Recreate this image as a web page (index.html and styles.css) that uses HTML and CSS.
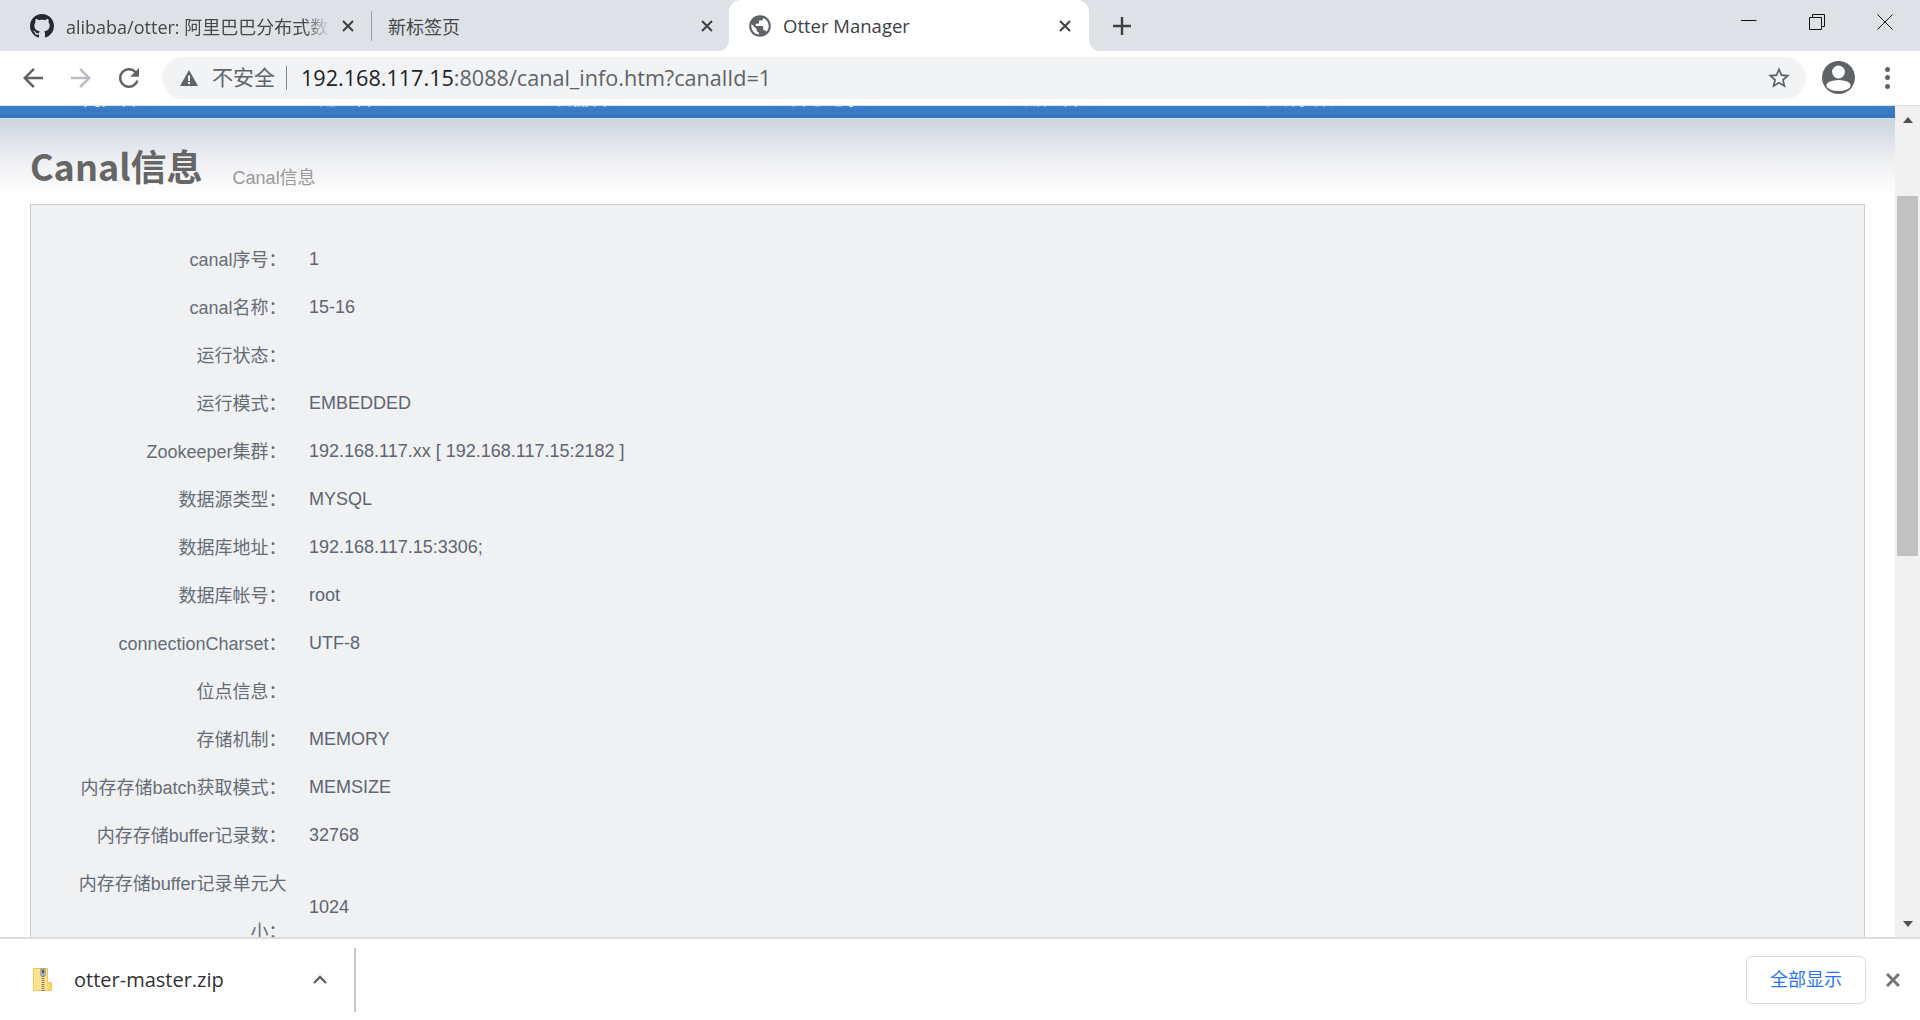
FILE: index.html
```html
<!DOCTYPE html>
<html lang="zh-CN">
<head>
<meta charset="utf-8">
<title>Otter Manager</title>
<link rel="stylesheet" href="styles.css">
</head>
<body>
<div class="tabstrip">
  <div class="tab tab-first">
    <svg class="favicon" viewBox="0 0 16 16"><path fill="#24292e" d="M8 0C3.58 0 0 3.58 0 8c0 3.54 2.29 6.53 5.47 7.59.4.07.55-.17.55-.38 0-.19-.01-.82-.01-1.49-2.01.37-2.53-.49-2.69-.94-.09-.23-.48-.94-.82-1.13-.28-.15-.68-.52-.01-.53.63-.01 1.08.58 1.23.82.72 1.21 1.87.87 2.33.66.07-.52.28-.87.51-1.07-1.78-.2-3.64-.89-3.64-3.95 0-.87.31-1.59.82-2.15-.08-.2-.36-1.02.08-2.12 0 0 .67-.21 2.2.82.64-.18 1.32-.27 2-.27.68 0 1.36.09 2 .27 1.53-1.04 2.2-.82 2.2-.82.44 1.1.16 1.92.08 2.12.51.56.82 1.27.82 2.15 0 3.07-1.87 3.75-3.65 3.95.29.25.54.73.54 1.48 0 1.07-.01 1.93-.01 2.2 0 .21.15.46.55.38A8.013 8.013 0 0016 8c0-4.42-3.58-8-8-8z"/></svg>
    <span class="tab-title fade">alibaba/otter: 阿里巴巴分布式数</span>
    <svg class="tab-close" viewBox="0 0 14 14"><path d="M2 2l10 10M12 2L2 12"/></svg>
  </div>
  <div class="tab-sep"></div>
  <div class="tab tab-second">
    <span class="tab-title">新标签页</span>
    <svg class="tab-close" viewBox="0 0 14 14"><path d="M2 2l10 10M12 2L2 12"/></svg>
  </div>
  <div class="tab tab-active">
    <svg class="globe" viewBox="0 0 24 24"><path fill="#5f6368" d="M12 2C6.48 2 2 6.48 2 12s4.48 10 10 10 10-4.48 10-10S17.52 2 12 2zm-1 17.93c-3.95-.49-7-3.85-7-7.93 0-.62.08-1.21.21-1.79L9 15v1c0 1.1.9 2 2 2v1.93zm6.9-2.54c-.26-.81-1-1.39-1.9-1.39h-1v-3c0-.55-.45-1-1-1H8v-2h2c.55 0 1-.45 1-1V7h2c1.1 0 2-.9 2-2v-.41c2.93 1.19 5 4.06 5 7.41 0 2.08-.8 3.97-2.1 5.39z"/></svg>
    <span class="tab-title">Otter Manager</span>
    <svg class="tab-close" viewBox="0 0 14 14"><path d="M2 2l10 10M12 2L2 12"/></svg>
  </div>
  <svg class="new-tab" viewBox="0 0 20 20"><path d="M10 1v18M1 10h18"/></svg>
  <div class="window-controls">
    <svg class="win-btn" viewBox="0 0 16 16"><path d="M0 6.5h15.5"/></svg>
    <svg class="win-btn" viewBox="0 0 16 16"><path d="M.5 3.5h12v12H.5zM3.5 3.5V.5h12v12h-3"/></svg>
    <svg class="win-btn" viewBox="0 0 16 16"><path d="M.5.5l15 15M15.5.5l-15 15"/></svg>
  </div>
</div>

<div class="toolbar">
  <svg class="nav-icon" viewBox="0 0 24 24"><path fill="#5f6368" d="M20 11H7.83l5.59-5.59L12 4l-8 8 8 8 1.41-1.41L7.83 13H20v-2z"/></svg>
  <svg class="nav-icon" viewBox="0 0 24 24"><path fill="#b9bcc0" d="M4 11h12.17l-5.59-5.59L12 4l8 8-8 8-1.41-1.41L16.17 13H4v-2z"/></svg>
  <svg class="nav-icon" viewBox="0 0 24 24"><path fill="#5f6368" d="M17.65 6.35C16.2 4.9 14.21 4 12 4c-4.42 0-7.99 3.58-7.99 8s3.57 8 7.99 8c3.73 0 6.84-2.55 7.73-6h-2.08c-.82 2.33-3.04 4-5.65 4-3.31 0-6-2.69-6-6s2.69-6 6-6c1.66 0 3.14.69 4.22 1.78L13 11h7V4l-2.35 2.35z"/></svg>
  <div class="omnibox">
    <svg class="warn" viewBox="0 0 18 16"><path fill="#5f6368" d="M9 0l9 16H0z"/><path fill="#f1f3f4" d="M8 5.5h2v5.5H8zM8 12h2v2H8z"/></svg>
    <span class="insecure">不安全</span>
    <span class="omni-sep"></span>
    <span class="url"><span class="host">192.168.117.15</span>:8088/canal_info.htm?canalId=1</span>
    <svg class="star" viewBox="0 0 24 24"><path fill="#5f6368" d="M22 9.24l-7.19-.62L12 2 9.19 8.63 2 9.24l5.46 4.73L5.82 21 12 17.27 18.18 21l-1.63-7.03L22 9.24zM12 15.4l-3.76 2.27 1-4.28-3.32-2.88 4.38-.38L12 6.1l1.71 4.04 4.38.38-3.32 2.88 1 4.28L12 15.4z"/></svg>
  </div>
  <svg class="avatar" viewBox="0 0 33 33"><circle cx="16.5" cy="16.5" r="16.5" fill="#5f6368"/><circle cx="16.5" cy="11" r="6.4" fill="#fff"/><ellipse cx="16.5" cy="24.5" rx="12" ry="5.6" fill="#fff"/></svg>
  <div class="kebab"><i></i><i></i><i></i></div>
</div>

<div class="viewport">
  <div class="page">
    <div class="nav-strip">
      <ul class="nav-list">
        <li>同步管理</li><li>配置管理</li><li>机器管理</li><li>日志记录</li><li>用户管理</li><li>系统参数</li>
      </ul>
    </div>
    <div class="page-head">
      <h1 class="page-title">Canal信息</h1>
      <span class="page-sub">Canal信息</span>
    </div>
    <div class="panel">
      <div class="row"><div class="label">canal序号：</div><div class="value">1</div></div>
      <div class="row"><div class="label">canal名称：</div><div class="value">15-16</div></div>
      <div class="row"><div class="label">运行状态：</div><div class="value"></div></div>
      <div class="row"><div class="label">运行模式：</div><div class="value">EMBEDDED</div></div>
      <div class="row"><div class="label">Zookeeper集群：</div><div class="value">192.168.117.xx [ 192.168.117.15:2182 ]</div></div>
      <div class="row"><div class="label">数据源类型：</div><div class="value">MYSQL</div></div>
      <div class="row"><div class="label">数据库地址：</div><div class="value">192.168.117.15:3306;</div></div>
      <div class="row"><div class="label">数据库帐号：</div><div class="value">root</div></div>
      <div class="row"><div class="label">connectionCharset：</div><div class="value">UTF-8</div></div>
      <div class="row"><div class="label">位点信息：</div><div class="value"></div></div>
      <div class="row"><div class="label">存储机制：</div><div class="value">MEMORY</div></div>
      <div class="row"><div class="label">内存存储batch获取模式：</div><div class="value">MEMSIZE</div></div>
      <div class="row"><div class="label">内存存储buffer记录数：</div><div class="value">32768</div></div>
      <div class="row"><div class="label">内存存储buffer记录单元大小：</div><div class="value">1024</div></div>
    </div>
  </div>
  <div class="scrollbar">
    <span class="arrow-up"></span>
    <div class="track"><div class="thumb"></div></div>
    <span class="arrow-down"></span>
  </div>
</div>

<div class="download-bar">
  <svg class="zip" viewBox="0 0 19 23">
    <path fill="#fde58f" stroke="#f2c84b" d="M.5.5h14v14h4v8H.5z"/>
    <path fill="#fbd76a" d="M14 15h4v7h-4z"/>
    <rect x="7" y="0" width="6" height="8" rx="1" fill="#a9a9a9"/>
    <rect x="9" y="2" width="2" height="3" fill="#555"/>
    <path fill="none" stroke="#777" stroke-width="3" stroke-dasharray="1 1" d="M10 8v15"/>
  </svg>
  <span class="file-name">otter-master.zip</span>
  <svg class="chevron" viewBox="0 0 14 9"><path d="M1 8l6-6 6 6"/></svg>
  <div class="bar-sep"></div>
  <div class="show-all">全部显示</div>
  <svg class="bar-close" viewBox="0 0 14 14"><path d="M1 1l12 12M13 1L1 13"/></svg>
</div>
</body>
</html>
```
FILE: styles.css
```css
* { box-sizing: border-box; }
html, body { height: 100%; }
body {
  margin: 0;
  height: 1020px;
  display: flex;
  flex-direction: column;
  overflow: hidden;
  background: #fff;
  font-family: "Liberation Sans", "Noto Sans CJK SC", sans-serif;
}

/* tab strip */
.tabstrip {
  flex: none;
  height: 51px;
  display: flex;
  align-items: center;
  background: #dee1e6;
  font-family: "Open Sans", "Noto Sans CJK SC", sans-serif;
  font-size: 18px;
  color: #45474b;
}
.tab {
  height: 51px;
  display: flex;
  align-items: center;
  flex: none;
}
.tab-first { width: 371px; padding-left: 30px; }
.favicon { width: 24px; height: 24px; flex: none; margin-right: 12px; }
.tab-title { white-space: nowrap; overflow: hidden; flex: 1; min-width: 0; }
.fade {
  -webkit-mask-image: linear-gradient(90deg, #000 90%, transparent);
  mask-image: linear-gradient(90deg, #000 90%, transparent);
}
.tab-close { width: 14px; height: 14px; flex: none; fill: none; stroke: #3c4043; stroke-width: 2; margin-left: 11px; margin-right: 16px; }
.tab-sep { flex: none; width: 1px; height: 30px; background: #9aa0a6; }
.tab-second { width: 357px; padding-left: 16px; }
.tab-second .tab-close { margin-right: 15px; }
.tab-active {
  position: relative;
  width: 360px;
  padding-left: 18px;
  background: #fff;
  border-radius: 12px 12px 0 0;
  color: #3c4043;
}
.tab-active .tab-title { font-size: 18.5px; margin-left: -1px; }
.tab-active .tab-close { margin-right: 17px; }
.tab-active::before, .tab-active::after {
  content: "";
  position: absolute;
  bottom: 0;
  width: 12px;
  height: 12px;
}
.tab-active::before { left: -12px; background: radial-gradient(circle at 0 0, transparent 12px, #fff 12.5px); }
.tab-active::after { right: -12px; background: radial-gradient(circle at 100% 0, transparent 12px, #fff 12.5px); }
.globe { width: 26px; height: 26px; flex: none; margin-right: 11px; }
.new-tab { width: 20px; height: 20px; flex: none; margin-left: 23px; fill: none; stroke: #3c4043; stroke-width: 2.4; }
.window-controls {
  margin-left: auto;
  margin-right: 27px;
  display: flex;
  gap: 52px;
  align-self: flex-start;
  padding-top: 14px;
}
.win-btn { width: 16px; height: 16px; fill: none; stroke: #111; stroke-width: 1; }

/* toolbar */
.toolbar {
  flex: none;
  height: 55px;
  display: flex;
  align-items: center;
  background: #fff;
  border-bottom: 1px solid #dfe1e5;
  padding-bottom: 1px;
  padding-left: 18px;
}
.nav-icon { width: 30px; height: 30px; flex: none; margin-right: 18px; }
.omnibox {
  flex: none;
  width: 1644px;
  height: 42px;
  border-radius: 21px;
  background: #f1f3f4;
  display: flex;
  align-items: center;
  padding-left: 18px;
  font-family: "Open Sans", "Noto Sans CJK SC", sans-serif;
  font-size: 21.6px;
  color: #5f6368;
}
.warn { width: 18px; height: 16px; flex: none; margin-right: 14px; }
.insecure { font-size: 21px; line-height: 30px; margin-top: -2px; }
.omni-sep { width: 1px; height: 24px; background: #80868b; margin: 0 14px 0 11px; }
.url { white-space: nowrap; }
.host { color: #202124; }
.star { width: 26px; height: 26px; margin-left: auto; margin-right: 14px; flex: none; }
.avatar { width: 33px; height: 33px; flex: none; margin-left: 16px; }
.kebab { display: flex; flex-direction: column; gap: 3.5px; margin-left: 30px; }
.kebab i { display: block; width: 5px; height: 5px; border-radius: 50%; background: #5f6368; }

/* page area */
.viewport {
  flex: 1;
  min-height: 0;
  display: flex;
  overflow: hidden;
}
.page { flex: 1; min-width: 0; overflow: hidden; background: #fff; }
.nav-strip {
  height: 13px;
  overflow: hidden;
  background: linear-gradient(#3b7ec9, #3873bd);
  border-bottom: 1px solid #cfe0f2;
}
.nav-list {
  list-style: none;
  margin: -17px 0 0;
  padding: 0 0 0 83px;
  display: flex;
  font-size: 18px;
  line-height: 20px;
  color: #fff;
}
.nav-list li { flex: none; width: 235.5px; }
.page-head {
  height: 85px;
  padding: 21px 0 0 30px;
  display: flex;
  align-items: flex-start;
  background: linear-gradient(#cdd3de, #eff0f3 50%, #fff 90%);
}
.page-title {
  margin: 0;
  font-family: "Noto Sans CJK SC", sans-serif;
  font-size: 36px;
  line-height: 50px;
  font-weight: 700;
  color: #666;
}
.page-sub { margin: 28px 0 0 30px; font-size: 18px; line-height: 21px; color: #999; }
.panel {
  margin: 0 30px 0 30px;
  padding-top: 30.5px;
  height: 800px;
  background: #f0f1f3;
  border: 1px solid #cdcdcd;
  border-bottom: 0;
  font-size: 18px;
  line-height: 48px;
  color: #5f6470;
}
.row { display: flex; align-items: center; }
.label { flex: none; width: 255.5px; padding-left: 47px; text-align: right; color: #666c76; }
.value { margin-left: 22.5px; margin-bottom: 2px; min-height: 46px; line-height: 46px; }

/* scrollbar */
.scrollbar {
  flex: none;
  width: 25px;
  display: flex;
  flex-direction: column;
  align-items: center;
  background: #f1f1f1;
}
.arrow-up, .arrow-down {
  flex: none;
  width: 0;
  height: 0;
  border-left: 5.5px solid transparent;
  border-right: 5.5px solid transparent;
}
.arrow-up { border-bottom: 6px solid #505050; margin-top: 11px; }
.arrow-down { border-top: 6px solid #505050; margin-bottom: 10px; }
.track { flex: 1; width: 100%; padding: 73px 2px 0 2px; }
.thumb { height: 360px; background: #c1c1c1; }

/* download bar */
.download-bar {
  flex: none;
  height: 83px;
  display: flex;
  align-items: center;
  background: #fff;
  border-top: 2px solid #dadce0;
  padding-left: 33px;
}
.zip { width: 19px; height: 23px; flex: none; }
.file-name {
  margin-left: 22px;
  width: 149px;
  flex: none;
  font-family: "Open Sans", sans-serif;
  font-size: 20px;
  color: #303134;
  white-space: nowrap;
}
.chevron { width: 14px; height: 9px; flex: none; margin-left: 90px; fill: none; stroke: #5f6368; stroke-width: 2.4; }
.bar-sep { width: 2px; height: 64px; background: #c8c8c8; flex: none; margin-left: 27px; }
.show-all {
  margin-left: auto;
  width: 120px;
  height: 48px;
  flex: none;
  border: 1px solid #dadce0;
  border-radius: 6px;
  text-align: center;
  line-height: 46px;
  font-size: 18px;
  color: #2a73f0;
}
.bar-close { width: 14px; height: 14px; flex: none; margin: 0 20px 0 20px; fill: none; stroke: #757575; stroke-width: 3; }
```
